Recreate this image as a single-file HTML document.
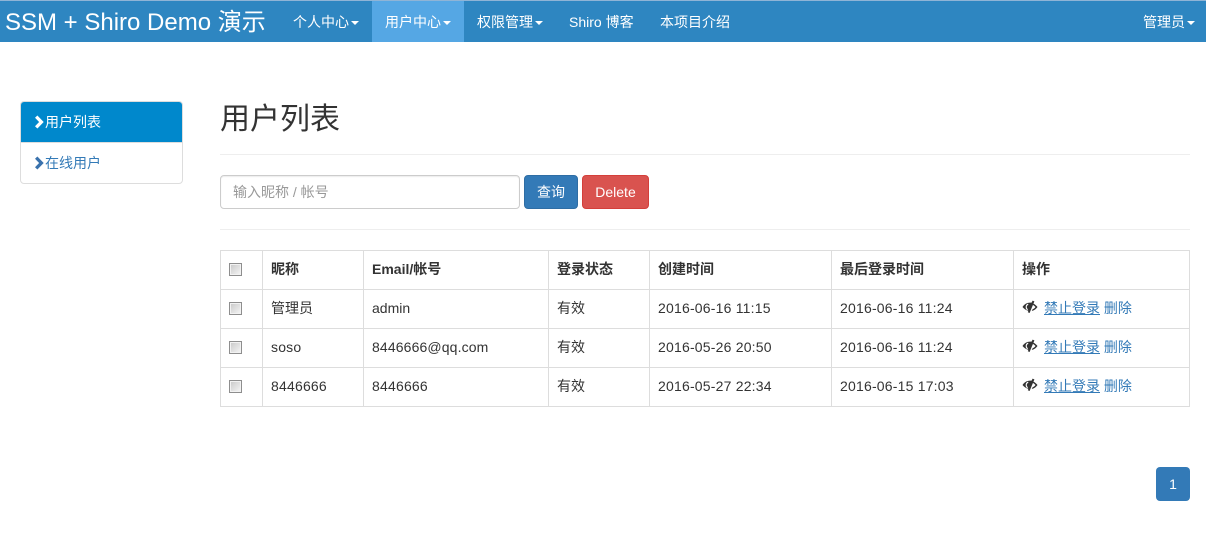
<!DOCTYPE html>
<html lang="zh-CN">
<head>
<meta charset="utf-8">
<title>用户列表</title>
<style>
*{box-sizing:border-box}
html,body{margin:0;padding:0;width:1206px;height:558px;overflow:hidden;background:#fff}
body{position:relative;font-family:"Liberation Sans","Noto Sans CJK SC",sans-serif;font-size:14px;color:#333;line-height:20px}
a{color:#337ab7;text-decoration:none}
.nav{position:absolute;left:0;top:0;width:1206px;height:42px;background:#2e86c1;border-top:1px solid #8fb4d6}
.active{position:absolute;left:372px;top:1px;width:92px;height:41px;background:#55a7e4}
.ni{position:absolute;top:12px;color:#fff;font-size:14px;line-height:20px;white-space:nowrap}
.caret{display:inline-block;width:0;height:0;margin-left:2px;vertical-align:middle;border-top:4px solid #fff;border-left:4px solid transparent;border-right:4px solid transparent}
.brand{position:absolute;left:5px;top:8px;color:#fff;font-size:24px;line-height:30px;white-space:nowrap}
.side{position:absolute;left:20px;top:101px;width:163px;height:83px;border:1px solid #ddd;border-radius:4px;overflow:hidden}
.s1{position:absolute;left:0;top:0;width:161px;height:40px;background:#0088cc;color:#fff;padding:10px 0 0 24px}
.s2{position:absolute;left:0;top:40px;width:161px;height:41px;border-top:1px solid #ddd;color:#337ab7;padding:10px 0 0 24px}
.chev{position:absolute;left:12px;top:13px}
h1{position:absolute;left:220px;top:100px;margin:0;font-size:30px;font-weight:400;line-height:40px;color:#333}
.hr{position:absolute;left:220px;width:970px;height:1px;background:#eee}
.input{position:absolute;left:220px;top:175px;width:300px;height:34px;border:1px solid #ccc;border-radius:4px;padding:6px 12px;color:#999;box-shadow:inset 0 1px 1px rgba(0,0,0,.075)}
.btn{position:absolute;top:175px;height:34px;border-radius:4px;color:#fff;text-align:center;line-height:32px}
table{position:absolute;left:220px;top:250px;width:969px;border-collapse:collapse;table-layout:fixed}
td,th{border:1px solid #ddd;height:39px;padding:8px;font-size:14px;line-height:20px;text-align:left;vertical-align:top;white-space:nowrap;overflow:hidden}
th{font-weight:700}
.d{letter-spacing:.2px}
.e{letter-spacing:.13px}
.cb{display:block;width:13px;height:13px;margin-top:4px;border:1px solid #8e8e8e;background:linear-gradient(135deg,#c8c8c8,#f6f6f6);box-shadow:inset 0 0 0 1px #f2f2f2}
.op u{text-decoration:underline}
.pg{position:absolute;left:1156px;top:467px;width:34px;height:34px;border-radius:4px;background:#337ab7;color:#fff;text-align:center;line-height:34px}
</style>
</head>
<body>
<div class="nav"></div>
<div class="active"></div>
<div class="brand">SSM + Shiro Demo 演示</div>
<div class="ni" style="left:293px">个人中心<span class="caret"></span></div>
<div class="ni" style="left:385px">用户中心<span class="caret"></span></div>
<div class="ni" style="left:477px">权限管理<span class="caret"></span></div>
<div class="ni" style="left:569px">Shiro 博客</div>
<div class="ni" style="left:660px">本项目介绍</div>
<div class="ni" style="left:1143px">管理员<span class="caret"></span></div>

<div class="side">
  <div class="s1"><svg class="chev" width="12" height="14" viewBox="0 0 12 14"><path d="M3.2 1.6 L8.4 7 L3.2 12.4" fill="none" stroke="#fff" stroke-width="3.3"/></svg>用户列表</div>
  <div class="s2"><svg class="chev" width="12" height="14" viewBox="0 0 12 14"><path d="M3.2 1.6 L8.4 7 L3.2 12.4" fill="none" stroke="#3a72ad" stroke-width="3.3"/></svg>在线用户</div>
</div>

<h1>用户列表</h1>
<div class="hr" style="top:154px"></div>
<div class="input">输入昵称 / 帐号</div>
<div class="btn" style="left:524px;width:54px;background:#337ab7;border:1px solid #2e6da4">查询</div>
<div class="btn" style="left:582px;width:67px;background:#d9534f;border:1px solid #d43f3a">Delete</div>
<div class="hr" style="top:229px"></div>

<svg width="0" height="0" style="position:absolute"><defs><g id="eye"><path d="M.5 7C2.3 4.2 5 2.6 8 2.6H9.6L10.6.6 12.4 1.4 7.6 13 5.8 12.2 6.4 10.9C4 10.2 2 8.8.5 7Z" fill="#333"/><path d="M6.2 4.2C3.9 5 3.4 8.2 5.6 9.8" fill="none" stroke="#fff" stroke-width="1.1"/><path d="M11.4 3.6C13 4.4 14.4 5.6 15.5 7 14.3 8.8 12.3 10.4 9.8 11L10.6 9.3C11.8 8.9 12.8 8 13.5 7 12.7 6 11.6 5.2 10.6 4.7Z" fill="#333"/></g></defs></svg>

<table>
<colgroup><col style="width:42px"><col style="width:101px"><col style="width:185px"><col style="width:101px"><col style="width:182px"><col style="width:182px"><col style="width:176px"></colgroup>
<tr><th><span class="cb"></span></th><th>昵称</th><th>Email/帐号</th><th>登录状态</th><th>创建时间</th><th>最后登录时间</th><th>操作</th></tr>
<tr><td><span class="cb"></span></td><td>管理员</td><td>admin</td><td>有效</td><td class="d">2016-06-16 11:15</td><td class="d">2016-06-16 11:24</td><td class="op"><svg width="16" height="14" viewBox="0 0 16 14" style="vertical-align:-1px;margin-right:6px"><use href="#eye"/></svg><a href="#"><u>禁止登录</u> 删除</a></td></tr>
<tr><td><span class="cb"></span></td><td class="d">soso</td><td class="e">8446666@qq.com</td><td>有效</td><td class="d">2016-05-26 20:50</td><td class="d">2016-06-16 11:24</td><td class="op"><svg width="16" height="14" viewBox="0 0 16 14" style="vertical-align:-1px;margin-right:6px"><use href="#eye"/></svg><a href="#"><u>禁止登录</u> 删除</a></td></tr>
<tr><td><span class="cb"></span></td><td class="d">8446666</td><td class="d">8446666</td><td>有效</td><td class="d">2016-05-27 22:34</td><td class="d">2016-06-15 17:03</td><td class="op"><svg width="16" height="14" viewBox="0 0 16 14" style="vertical-align:-1px;margin-right:6px"><use href="#eye"/></svg><a href="#"><u>禁止登录</u> 删除</a></td></tr>
</table>

<div class="pg">1</div>
</body>
</html>
